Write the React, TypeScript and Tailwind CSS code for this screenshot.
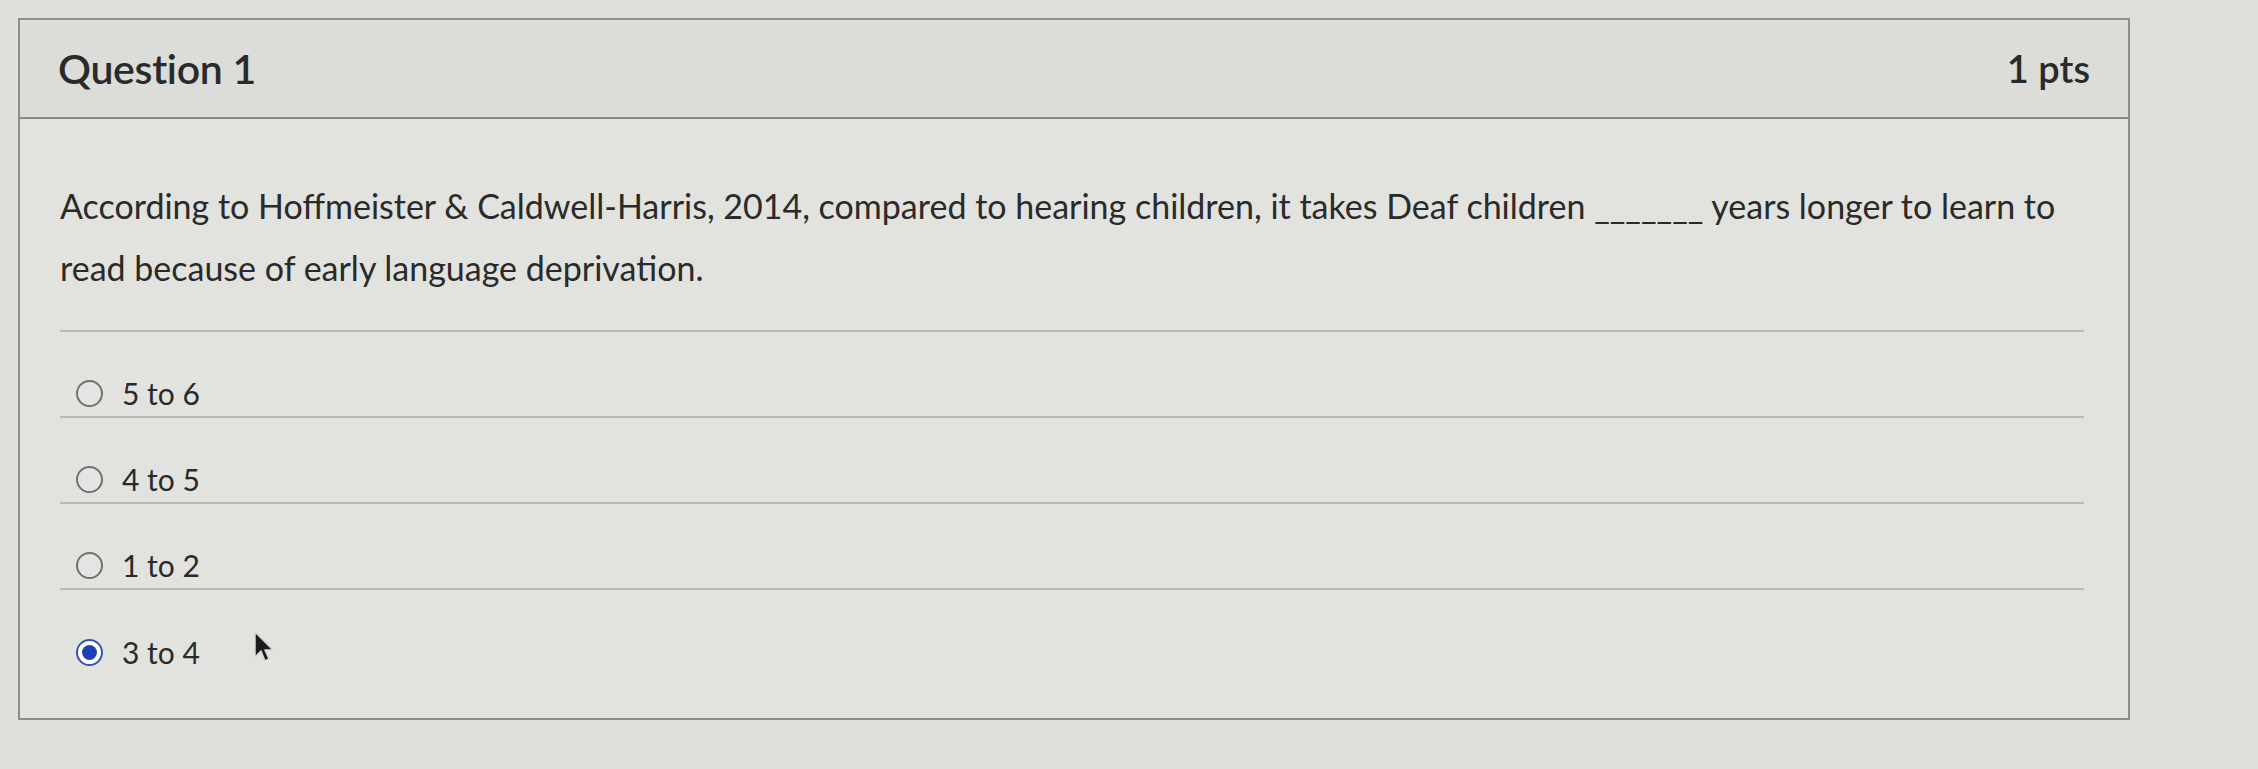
const answers = [
  { id: "a1", label: "5 to 6" },
  { id: "a2", label: "4 to 5" },
  { id: "a3", label: "1 to 2" },
  { id: "a4", label: "3 to 4" },
];

const Radio = ({ checked }: { checked: boolean }) =>
  checked ? (
    <span className="w-[27px] h-[27px] rounded-full border-2 border-[#3552b5] bg-white flex items-center justify-center shrink-0">
      <span className="w-[15px] h-[15px] rounded-full bg-[#1f3fb8]" />
    </span>
  ) : (
    <span className="w-[27px] h-[27px] rounded-full border-2 border-[#707070] bg-[#e4e4e2] shrink-0" />
  );

const Cursor = () => (
  <svg
    className="absolute left-[130px] top-[0px]"
    width="26"
    height="34"
    viewBox="0 0 26 34"
  >
    <path
      d="M3 2 L3 27 L9 21 L13 31 L17 29 L13 20 L21 20 Z"
      fill="#1c1c1c"
      stroke="#d8d8d8"
      strokeWidth="1.5"
      strokeLinejoin="round"
    />
  </svg>
);

export default function App() {
  const selected = "a4";

  return (
    <div className="w-[2258px] h-[769px] bg-[#dfdfdc] pt-[18px] pl-[18px] font-['Lato','Liberation_Sans',sans-serif] text-[#2a2a2a]">
      <div className="w-[2112px] h-[702px] border-2 border-[#8d8d8b] bg-[#e2e2df]">
        <div className="h-[99px] flex items-center justify-between px-[38px] bg-[#dcdcd9] border-b-2 border-[#8a8a88]">
          <h2 className="text-[41px] font-semibold tracking-[-0.3px]">Question 1</h2>
          <span className="text-[38px] font-semibold">1 pts</span>
        </div>

        <div className="pl-[40px] pr-[44px] pt-[56px]">
          <div className="text-[34px] leading-[62px] pb-[31px] border-b-2 border-[#b9b9b6]">
            <p className="whitespace-nowrap">
              According to Hoffmeister &amp; Caldwell-Harris, 2014, compared to hearing
              children, it takes Deaf children _______ years longer to learn to
            </p>
            <p className="whitespace-nowrap">read because of early language deprivation.</p>
          </div>

          {answers.map((a, i) => (
            <div
              key={a.id}
              className={`h-[86px] flex items-center gap-[19px] pl-[16px] pt-[38px] ${
                i < answers.length - 1 ? "border-b-2 border-[#b9b9b6]" : ""
              }`}
            >
              <Radio checked={a.id === selected} />
              <span className="relative text-[30px]">
                {a.label}
                {a.id === selected && <Cursor />}
              </span>
            </div>
          ))}
        </div>
      </div>
    </div>
  );
}
